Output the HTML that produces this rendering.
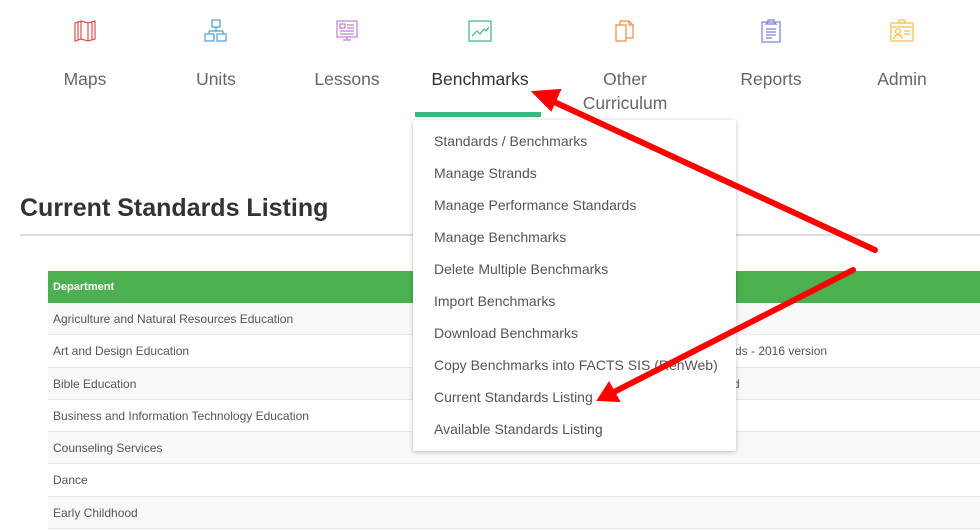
<!DOCTYPE html>
<html><head><meta charset="utf-8"><style>
*{margin:0;padding:0;box-sizing:border-box}
body{width:980px;height:532px;overflow:hidden;background:#fff;font-family:"Liberation Sans",sans-serif;position:relative}
.nav{position:absolute;top:0;text-align:center;width:130px;margin-left:-65px}
.nav svg{position:absolute;top:19px;left:53px}
.nav span{position:absolute;top:67px;left:0;width:130px;font-size:17.5px;color:#666;line-height:24px}
.ul{position:absolute;left:415px;top:112px;width:126px;height:5px;background:#3fb57f}
h1{position:absolute;left:20px;top:194px;font-size:25px;font-weight:bold;color:#333}
.hr{position:absolute;left:20px;top:234px;width:960px;height:2px;background:#ddd}
.tbl{position:absolute;left:48px;top:271px;width:932px}
.th{height:32px;background:#4caf50;color:#fff;font-weight:bold;font-size:11px;line-height:32px;padding-left:5px}
.tr{height:32.3px;line-height:32px;font-size:12px;color:#555;padding-left:5px;border-bottom:1px solid #e6e6e6}
.tr:nth-child(even){background:#f9f9f9}
.tr i{position:absolute;font-style:normal}
.dd{position:absolute;left:413px;top:120px;width:323px;height:331px;background:#fff;box-shadow:0 1px 5px rgba(0,0,0,.25);border-radius:2px;padding-top:10px}
.dd div{height:32px;line-height:22px;padding-left:21px;font-size:14px;color:#555}
</style></head><body>
<div class="nav" style="left:85px"><svg width="24" height="24" viewBox="0 0 24 24" fill="none" stroke="#d9534f" stroke-width="1.2"><path d="M2 4l6-2 7 2 7-2v18l-7 2-7-2-6 2z M8 2v18 M15 4v18 M5 3v18 M19 3v18"/></svg><span>Maps</span></div>
<div class="nav" style="left:216px"><svg width="24" height="24" viewBox="0 0 24 24" fill="none" stroke="#4a9fd5" stroke-width="1.2"><rect x="8" y="1" width="8" height="7"/><path d="M12 8v4M5 12h14M5 12v3M19 12v3"/><rect x="1" y="15" width="9" height="7"/><rect x="13" y="15" width="9" height="7"/></svg><span>Units</span></div>
<div class="nav" style="left:347px"><svg width="24" height="24" viewBox="0 0 24 24" fill="none" stroke="#c07fd0" stroke-width="1.2"><rect x="2" y="2" width="20" height="16"/><rect x="5" y="5" width="5" height="4"/><path d="M12 6h7M12 9h7M5 12h14M5 15h14M12 18v3M8 21h8"/></svg><span>Lessons</span></div>
<div class="nav" style="left:480px"><svg width="24" height="24" viewBox="0 0 24 24" fill="none" stroke="#3fb57f" stroke-width="1.2"><rect x="1" y="2" width="22" height="20"/><path d="M4 17l5-5 3 3 4-5 2 2 3-4"/></svg><span style="color:#333">Benchmarks</span></div>
<div class="nav" style="left:625px"><svg width="24" height="24" viewBox="0 0 24 24" fill="none" stroke="#ef8a4a" stroke-width="1.2"><path d="M3 6h10v16H3z M7 6V2h9l4 4v13h-7 M16 2v4h4"/></svg><span>Other<br>Curriculum</span></div>
<div class="nav" style="left:771px"><svg width="24" height="24" viewBox="0 0 24 24" fill="none" stroke="#7b7fe0" stroke-width="1.2"><rect x="3" y="3" width="18" height="20"/><path d="M9 3V1h6v2l2 2H7z M7 10h10M7 13h10M7 16h10M7 19h6"/></svg><span>Reports</span></div>
<div class="nav" style="left:902px"><svg width="24" height="24" viewBox="0 0 24 24" fill="none" stroke="#f0c04a" stroke-width="1.2"><rect x="1" y="4" width="22" height="18"/><path d="M9 1h6v3H9z M1 8h22 M4 20c0-3 2-4 4-4s4 1 4 4 M8 15a2.5 2.5 0 1 0 0-5 2.5 2.5 0 0 0 0 5 M14 12h6M14 15h6"/></svg><span>Admin</span></div>
<div class="ul"></div>
<h1>Current Standards Listing</h1>
<div class="hr"></div>
<div class="tbl">
<div class="th">Department</div>
<div class="tr">Agriculture and Natural Resources Education</div>
<div class="tr">Art and Design Education<i style="left:687px">ds - 2016 version</i></div>
<div class="tr">Bible Education<i style="left:685px">d</i></div>
<div class="tr">Business and Information Technology Education</div>
<div class="tr">Counseling Services</div>
<div class="tr">Dance</div>
<div class="tr">Early Childhood</div>
</div>
<div class="dd">
<div>Standards / Benchmarks</div>
<div>Manage Strands</div>
<div>Manage Performance Standards</div>
<div>Manage Benchmarks</div>
<div>Delete Multiple Benchmarks</div>
<div>Import Benchmarks</div>
<div>Download Benchmarks</div>
<div>Copy Benchmarks into FACTS SIS (RenWeb)</div>
<div>Current Standards Listing</div>
<div>Available Standards Listing</div>
</div>
<svg width="980" height="532" style="position:absolute;left:0;top:0" viewBox="0 0 980 532">
<g fill="#f00" stroke="#f00" stroke-linecap="round">
<line x1="875" y1="250" x2="550" y2="100" stroke-width="6"/>
<polygon points="533,92 560,90 551,110" stroke-width="2"/>
<line x1="853" y1="270" x2="612" y2="393" stroke-width="6"/>
<polygon points="598,400 609,383 619,401" stroke-width="2"/>
</g></svg>
</body></html>
